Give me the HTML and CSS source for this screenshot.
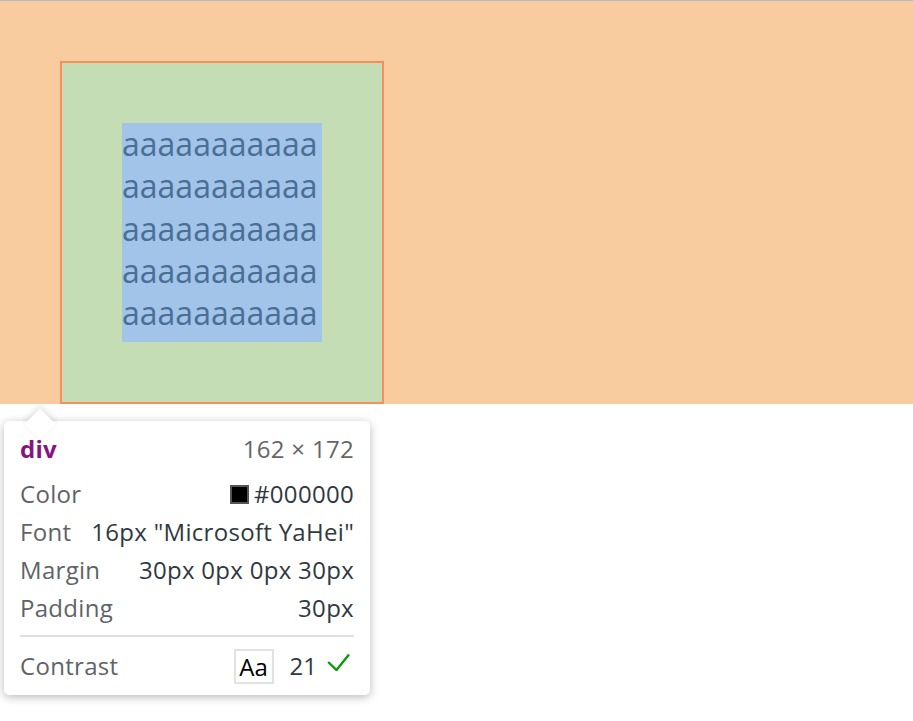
FILE: index.html
```html
<!DOCTYPE html>
<html>
<head>
<meta charset="utf-8">
<link rel="stylesheet" href="styles.css">
</head>
<body>
<div class="page">
  <div class="margin-area">
    <div class="box">
      <div class="content">
        <div class="text">aaaaaaaaaaa<br>aaaaaaaaaaa<br>aaaaaaaaaaa<br>aaaaaaaaaaa<br>aaaaaaaaaaa</div>
      </div>
    </div>
  </div>
  <div class="tooltip">
    <div class="arrow"></div>
    <div class="row head">
      <span class="tag">div</span>
      <span class="dims">162 × 172</span>
    </div>
    <div class="row">
      <span class="label">Color</span>
      <span class="value"><span class="swatch"></span>#000000</span>
    </div>
    <div class="row">
      <span class="label">Font</span>
      <span class="value">16px "Microsoft YaHei"</span>
    </div>
    <div class="row">
      <span class="label">Margin</span>
      <span class="value">30px 0px 0px 30px</span>
    </div>
    <div class="row">
      <span class="label">Padding</span>
      <span class="value">30px</span>
    </div>
    <div class="sep"></div>
    <div class="row contrast">
      <span class="label">Contrast</span>
      <span class="value cgroup">
        <span class="aa">Aa</span>
        <span class="ratio">21</span>
        <svg class="check" width="23" height="18" viewBox="0 0 23 18"><path d="M1.2 9 L9.5 17 L22 1.5" fill="none" stroke="#0a9a0a" stroke-width="2.4"/></svg>
      </span>
    </div>
  </div>
</div>
</body>
</html>
```

FILE: styles.css
```css
html, body {
  margin: 0;
  padding: 0;
  background: #ffffff;
}
.page {
  position: relative;
  width: 913px;
  height: 721px;
  overflow: hidden;
}
.margin-area {
  border-top: 1px solid #aeb9ca;
  background: #f8cc9e;
  height: 404px;
  padding: 60px 0 0 60px;
  box-sizing: border-box;
}
.box {
  width: 324px;
  height: 343px;
  box-sizing: border-box;
  border: 2px solid #f98d5c;
  background: #c4ddb5;
  padding: 60px 0 0 60px;
}
.content {
  width: 200px;
  height: 219px;
  background: #a1c4e8;
}
.text {
  font-family: "Open Sans", sans-serif;
  font-size: 32px;
  line-height: 42.3px;
  color: #4a6f97;
  white-space: nowrap;
}
.tooltip {
  position: absolute;
  left: 4px;
  top: 421px;
  width: 366px;
  box-sizing: border-box;
  background: #ffffff;
  border-radius: 5px;
  box-shadow: 0 2px 10px rgba(0, 0, 0, 0.28);
  padding: 9px 16px 10px 16px;
  font-family: "Open Sans", sans-serif;
  font-size: 24px;
  letter-spacing: 0.3px;
  color: #303942;
}
.arrow {
  position: absolute;
  left: 25px;
  top: -8px;
  width: 22px;
  height: 22px;
  background: #ffffff;
  transform: rotate(45deg);
  box-shadow: -2px -2px 6px rgba(0, 0, 0, 0.12);
}
.row {
  position: relative;
  display: flex;
  justify-content: space-between;
  align-items: center;
  height: 38px;
  line-height: 38px;
  white-space: nowrap;
}
.head {
  margin-bottom: 7px;
}
.tag {
  color: #881280;
  font-weight: 700;
}
.dims {
  color: #666666;
}
.label {
  color: #5f6368;
}
.value {
  color: #303942;
  display: flex;
  align-items: center;
}
.swatch {
  display: inline-block;
  width: 19px;
  height: 19px;
  box-sizing: border-box;
  border: 2px solid #555555;
  background: #000000;
  margin-right: 5px;
}
.sep {
  height: 2px;
  background: #e0e0e0;
  margin: 8px 0 10px 0;
}
.aa {
  display: inline-block;
  width: 40px;
  height: 35px;
  box-sizing: border-box;
  border: 2px solid #e2e2e2;
  color: #000000;
  line-height: 31px;
  text-align: center;
  font-size: 24px;
  letter-spacing: 0;
  margin-right: 16px;
}
.ratio {
  margin-right: 10px;
  letter-spacing: 0;
}
.check {
  display: block;
  margin-top: -8px;
  margin-right: 4px;
}
```
